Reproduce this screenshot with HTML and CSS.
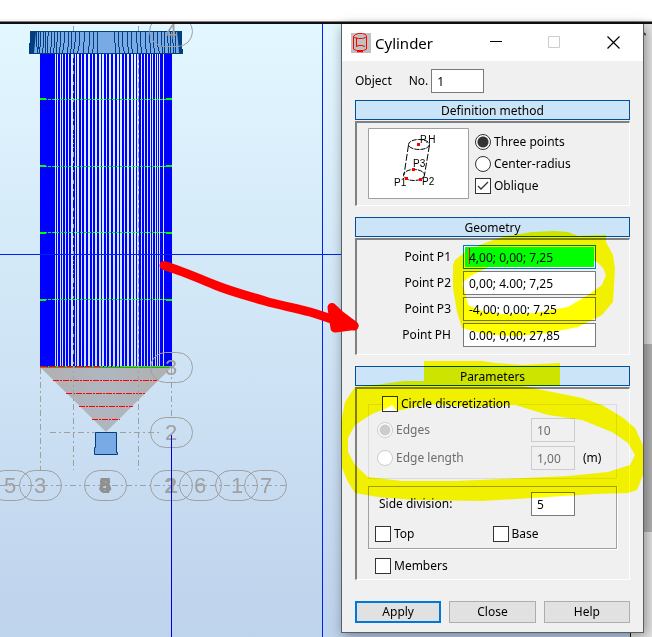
FILE: index.html
```
<!DOCTYPE html>
<html lang="en">
<head>
    <meta charset="UTF-8">
    <meta name="viewport" content="width=device-width, initial-scale=1.0">
    <title>Cylinder</title>
    <link rel="stylesheet" href="styles.css">
</head>
<body>
    <div class="toolbar"></div>
    <main class="workspace">
        <div class="view">
            <svg class="model" viewBox="0 24 652 613" width="652" height="613">
                <defs>
                    <linearGradient id="sky" gradientUnits="userSpaceOnUse" x1="0" y1="24" x2="0" y2="637">
                        <stop offset="0" stop-color="#e2f7ff"/>
                        <stop offset="1" stop-color="#bed3ec"/>
                    </linearGradient>
                    <linearGradient id="cone" x1="0" y1="0" x2="1" y2="0">
                        <stop offset="0" stop-color="#b0b0b0"/>
                        <stop offset=".5" stop-color="#b0b6c0"/>
                        <stop offset="1" stop-color="#b0b0b0"/>
                    </linearGradient>
                </defs>

                <!-- silo wall -->
                <rect x="40" y="54" width="132" height="313" fill="#0000ff"/>
                <g stroke="url(#sky)" fill="none">
                    <path d="M55.5 54v312M57.5 54v312M60.5 54v312M62.5 54v312M65.5 54v312M68.5 54v312M75.5 54v312M81.5 54v312M92.5 54v312M106.5 54v312M124.5 54v312M141.5 54v312M144.5 54v312M147.5 54v312M150.5 54v312M152.5 54v312M155.5 54v312M157.5 54v312M159.5 54v312M163.5 54v312"/>
                    <path stroke-width="2" d="M72 54v312M78 54v312M85 54v312M89 54v312M96 54v312M100 54v312M103 54v312M110 54v312M114 54v312M118 54v312M121 54v312M128 54v312M132 54v312M135 54v312M138 54v312"/>
                </g>
                <g stroke="#00ff00">
                    <path d="M40 99.5h132M40 166.5h132M40 232.5h132M40 299.5h132M40 366.5h132" stroke-dasharray="3 1"/>
                    <path stroke-width="2" d="M40 99h6M166 99h6M40 166h6M166 166h6M40 233h6M166 233h6M40 300h6M166 300h6M120 367h52"/>
                </g>

                <!-- hopper -->
                <path d="M40 367H172L106 432z" fill="url(#cone)"/>
                <g stroke="#ff0000">
                    <path d="M40 366.5h60" stroke-dasharray="7 2"/>
                    <path d="M53 380.5h104M66 393.5h80M79 406.5h54M92 419.5h28" stroke-dasharray="6 1 2 1"/>
                </g>
                <path d="M40 367.5h132" stroke="#7a7a3a"/>

                <!-- axes -->
                <g stroke="#a0a0a0" stroke-dasharray="6 3 2 3" fill="none">
                    <path d="M40.5 368V470M73.5 26V470M138.5 26V470M171.5 368V418M50 432.5H162M0 485.5H286"/>
                </g>
                <path d="M73.5 58V366" stroke="#0000c0" stroke-dasharray="4 5"/>
                <path d="M0 254.5H342M322.5 24V637" stroke="#0022f0"/>

                <!-- ring beam -->
                <path d="M30 31H182V49h1v5H29V43h1z" fill="#004080"/>
                <path d="M36 32H177l1 9 1 12H34l1-10z" fill="#7aaae6"/>
                <path class="crisp" d="M36.5 32v8l1 13M38.5 32v12l1 9M40.5 32v9l-1 12M43.5 32v12l-1 9M45.5 32v21M48.5 32l-1 9v12M51.5 32v10l-1 11M54.5 32v12l-1 9M57.5 32l-1 21M60.5 32v9l-1 12M64.5 32v8l-2 13M68.5 32v10l-1 11M71.5 32v14l-1 7M75.5 32v7l-2 14M79.5 32v12l-2 9M84.5 32l-1 21M89.5 32v8l-1 13M93.5 32v13l-1 8M97.5 32v21M114.5 32l1 21M118.5 32v9l1 12M122.5 32v13l2 8M127.5 32v8l1 13M131.5 32v12l1 9M136.5 32l1 21M140.5 32v8l1 13M145.5 32v12l1 9M149.5 32l1 21M153.5 32v10l1 11M157.5 32v13l2 8M161.5 32v9l1 12M164.5 32v21M167.5 32l1 21M170.5 32v21M172.5 32l1 21M175.5 32v21" stroke="#004080" fill="none"/>

                <!-- outlet -->
                <path d="M95.5 432.5h21v20h1v2h-23v-7h1z" fill="#7aaae6" stroke="#004080"/>

                <!-- axis bubbles -->
                <g fill="none" stroke="#a0a0a0">
                    <rect x="149.5" y="16.5" width="43" height="30" rx="15"/>
                    <rect x="150.5" y="352.5" width="42" height="30" rx="15"/>
                    <rect x="150.5" y="417.5" width="42" height="30" rx="15"/>
                    <rect x="-10.5" y="470.5" width="42" height="30" rx="15"/>
                    <rect x="19.5" y="470.5" width="42" height="30" rx="15"/>
                    <rect x="84.5" y="470.5" width="42" height="30" rx="15"/>
                    <rect x="150.5" y="470.5" width="42" height="30" rx="15"/>
                    <rect x="179.5" y="470.5" width="42" height="30" rx="15"/>
                    <rect x="215.5" y="470.5" width="42" height="30" rx="15"/>
                    <rect x="244.5" y="470.5" width="42" height="30" rx="15"/>
                </g>
                <g class="bubble-text">
                    <text x="171" y="39">4</text>
                    <text x="171" y="375">3</text>
                    <text x="171" y="440">2</text>
                    <text x="10" y="493">5</text>
                    <text x="40" y="493">3</text>
                    <g class="stacked">
                        <text x="105" y="493">4</text>
                        <text x="105" y="493">5</text>
                        <text x="105" y="493">8</text>
                    </g>
                    <text x="170" y="493">2</text>
                    <text x="171" y="493">2</text>
                    <text x="172" y="493">1</text>
                    <text x="200" y="493">6</text>
                    <text x="237" y="493">1</text>
                    <text x="266" y="493">7</text>
                </g>
                <path d="M171.5 435V637" stroke="#0000d8"/>
            </svg>
        </div>
        <div class="scroll-strip">
            <svg width="8" height="5" viewBox="0 0 8 5"><path d="M0 4l4-3 4 3" fill="none" stroke="#505050" stroke-width="2"/></svg>
            <div class="thumb"></div>
        </div>

        <form class="dialog" onsubmit="return false">
            <header class="titlebar">
                <svg width="20" height="20" viewBox="0 0 20 20">
                    <path d="M0 0h20v20H0z" fill="#c0c0c0"/>
                    <g fill="none" stroke="#ff0000">
                        <path d="M2.5 3.5l2-2 3-1h4l3 1 1 2-1 1-3 1h-4l-4-1z"/>
                        <path d="M2.500 3v13M15.500 3v13M5.500 5v8"/>
                        <path d="M5 13.500l3-1h3l3 1M2.500 16l3 1.500h7l3-1.500"/>
                        <path d="M6 18.500h6" stroke-width="1.500"/>
                    </g>
                </svg>
                <h1>Cylinder</h1>
                <button type="button" class="win-btn" aria-label="Minimize">
                    <svg width="13" height="13"><path d="M0 5.500h12" stroke="#000"/></svg>
                </button>
                <button type="button" class="win-btn" aria-label="Maximize" disabled>
                    <svg width="13" height="13"><path d="M.5.5h11v11H.5z" stroke="#ccc" fill="none"/></svg>
                </button>
                <button type="button" class="win-btn" aria-label="Close">
                    <svg width="13" height="13"><path d="M.5.5l12 12M12.500.5l-12 12" stroke="#000" stroke-width="1.200"/></svg>
                </button>
            </header>

            <div class="content">
                <div class="object-row">
                    <span>Object</span>
                    <label for="number">No.</label>
                    <input type="text" id="number" class="field number" value="1">
                </div>

                <h2>Definition method</h2>
                <section class="panel method">
                    <svg class="sketch" width="101" height="71" viewBox="0 0 101 71">
                        <path d="M.5.5h100v70H.5z" fill="#fff" stroke="#a0a0a0"/>
                        <g fill="none" stroke="#000">
                            <ellipse cx="51" cy="16.500" rx="10.500" ry="5" stroke-dasharray="5 1"/>
                            <ellipse cx="46" cy="47" rx="10.500" ry="5.500" stroke-dasharray="5 1"/>
                            <path d="M40.500 17l-4.500 30M61.500 17l-5 30" stroke-dasharray="7 2"/>
                        </g>
                        <path d="M49 15h3v3h-3zM44 40h3v3h-3zM37 49h3v3h-3zM51 50h3v3h-3z" fill="#ff0000"/>
                        <g class="sketch-text">
                            <text x="52" y="15">P.H</text>
                            <text x="45" y="39">P3</text>
                            <text x="26" y="58">P1</text>
                            <text x="54" y="57">P2</text>
                        </g>
                    </svg>
                    <div class="options">
                        <label><input type="radio" name="method" checked>Three points</label>
                        <label><input type="radio" name="method">Center-radius</label>
                        <label><input type="checkbox" checked>Oblique</label>
                    </div>
                </section>

                <h2>Geometry</h2>
                <section class="panel geometry">
                    <label for="p1">Point P1</label>
                    <input type="text" id="p1" class="field active" value="4,00; 0,00; 7,25">
                    <label for="p2">Point P2</label>
                    <input type="text" id="p2" class="field" value="0,00; 4.00; 7,25">
                    <label for="p3">Point P3</label>
                    <input type="text" id="p3" class="field" value="-4,00; 0,00; 7,25">
                    <label for="ph">Point PH</label>
                    <input type="text" id="ph" class="field" value="0.00; 0,00; 27,85">
                </section>

                <h2>Parameters</h2>
                <section class="panel parameters">
                    <fieldset class="circle">
                        <legend><label><input type="checkbox">Circle discretization</label></legend>
                        <div class="circle-grid">
                            <label class="off"><input type="radio" name="disc" checked disabled>Edges</label>
                            <input type="text" class="field" value="10" aria-label="Edges" disabled>
                            <span></span>
                            <label class="off"><input type="radio" name="disc" disabled>Edge length</label>
                            <input type="text" class="field" value="1,00" aria-label="Edge length" disabled>
                            <span>(m)</span>
                        </div>
                    </fieldset>
                    <div class="side">
                        <div class="side-row">
                            <label for="side">Side division:</label>
                            <input type="text" id="side" class="field" value="5">
                        </div>
                        <div class="checks">
                            <label><input type="checkbox">Top</label>
                            <label><input type="checkbox">Base</label>
                        </div>
                    </div>
                    <label class="members"><input type="checkbox">Members</label>
                </section>

                <div class="buttons">
                    <button type="submit" class="default">Apply</button>
                    <button type="button">Close</button>
                    <button type="button">Help</button>
                </div>
            </div>
        </form>

        <!-- marker strokes over the dialog -->
        <svg class="marks marker" viewBox="0 24 652 613" width="652" height="613">
            <path fill="#ffff00" fill-rule="evenodd" d="M453 265L455 260 468 250 485 243 502 237 532 232 555 231 568 232 578 236 606 235V242L613 255 615 268 613 302 602 315 578 327 548 333 515 336 485 334 462 328 457 312 453 288z
                M462 283L472 275 495 264 596 261 603 268 606 275 602 285 588 295 568 307 535 313 502 314 482 311 468 305 465 292z"/>
            <path fill="#ffff00" fill-rule="evenodd" d="M424 361H482L495 363 522 365 560 363V386H522L552 392 582 398 602 405 622 417 635 428 643 445V475L637 490 628 493 595 494 548 497 482 501 415 500 378 497 355 493 348 482 342 468 341 422 345 402 355 387 375 385 404 381H424z
                M348 438L355 425 372 414 385 409 392 405 397 411 428 404 470 407 515 405 548 415 582 420 612 432 628 443 635 455 630 465 608 472 568 476 502 479 455 481 402 481 368 477 355 465 348 452z"/>
        </svg>
        <svg class="marks" viewBox="0 24 652 613" width="652" height="613">
            <g fill="none" stroke="#ff0000" stroke-width="9" stroke-linecap="round" stroke-linejoin="round">
                <path d="M164 265.5C182 271 198 278 215 285S252 297 265 301 296 308 310 312 335 321 354 326"/>
                <path d="M332 307.5L340 315 354 325.5 335 328z" fill="#ff0000"/>
            </g>
        </svg>
    </main>
</body>
</html>
```
FILE: styles.css
```
* {
    box-sizing: border-box;
}
body {
    margin: 0;
    min-height: 100vh;
    display: flex;
    flex-direction: column;
    background: #fff;
    color: #000;
    font: 12px/16px "Noto Sans", Tahoma, sans-serif;
    overflow: hidden;
}
.toolbar {
    height: 24px;
    background: linear-gradient(#fff 80%, #f0f0f0);
    border-bottom: 2px solid #101010;
    box-shadow: inset 0 -1px #808080;
}
.workspace {
    position: relative;
    flex: 1;
    display: flex;
}
.view {
    flex: 1;
    overflow: hidden;
    position: relative;
    background: linear-gradient(#e2f7ff, #bed3ec);
    border-right: 1px solid #101010;
}
.model,
.marks {
    position: absolute;
    left: 0;
    top: 0;
}
.marks {
    pointer-events: none;
}
.marker {
    mix-blend-mode: multiply;
}
.crisp {
    shape-rendering: crispEdges;
}
.bubble-text {
    font: 22px "Liberation Sans", Arial, sans-serif;
    fill: #a0a0a0;
    text-anchor: middle;
}
.stacked {
    font-weight: bold;
    fill: #909090;
}
.scroll-strip {
    display: flex;
    flex-direction: column;
    align-items: center;
    gap: 308px;
    width: 21px;
    padding-top: 7px;
    background: #e6e6e6;
}
.thumb {
    width: 100%;
    height: 188px;
    background: #b4b4b4;
}

/* dialog window */
.dialog {
    position: absolute;
    left: 341px;
    right: 8px;
    top: 0;
    background: #f0f0f0;
    border: 1px solid #5a5f66;
    border-top: 0;
    box-shadow: 2px 3px 12px rgba(0, 0, 0, .4);
}
.titlebar {
    display: flex;
    align-items: center;
    height: 37px;
    padding: 0 16px 0 9px;
    background: #fff;
}
.titlebar h1 {
    flex: 1;
    margin: 0 0 0 4px;
    font-size: 15px;
    font-weight: normal;
}
.win-btn {
    display: flex;
    justify-content: center;
    width: 58px;
    padding: 0;
    border: 0;
    background: none;
}
.win-btn:last-child {
    width: 36px;
    margin-left: 12px;
    margin-right: -4px;
}
.content {
    padding: 8px 13px 9px;
}
.object-row {
    display: flex;
    align-items: center;
    margin-bottom: 7px;
}
.object-row label {
    margin-left: 17px;
    margin-right: 3px;
}
.field {
    width: 100%;
    height: 24px;
    padding: 0 5px;
    border: 1px solid #7a7a7a;
    border-radius: 0;
    background: #fff;
    color: #000;
    font: inherit;
}
.field:disabled {
    border-color: #ccc;
    background: #f0f0f0;
    color: #6d6d6d;
}
.number {
    width: 53px;
}
.active {
    border-color: #0078d7;
    background: linear-gradient(#ff0000, #ff0000) 5px 2px / 1px 16px no-repeat #00ff00;
    box-shadow: inset 0 0 0 1px #fff;
}
h2 {
    height: 20px;
    margin: 0 0 1px;
    border: 1px solid #00509b;
    background: #cce4f7;
    font-size: 12px;
    font-weight: normal;
    line-height: 19px;
    text-align: center;
}
.panel {
    margin-bottom: 11px;
    border: 2px solid #fff;
    border-top-color: #808080;
    border-left-color: #808080;
    border-right-width: 1px;
    border-bottom-width: 1px;
}
label {
    display: flex;
    align-items: center;
}
input[type="radio"],
input[type="checkbox"] {
    appearance: none;
    flex: none;
    width: 16px;
    height: 16px;
    margin: 0 3px 0 0;
    border: 1px solid #333;
    background: #fff;
}
input[type="radio"] {
    border-radius: 50%;
}
input[type="radio"]:checked {
    background: radial-gradient(circle, #333 5px, #fff 6px);
}
input[type="checkbox"]:checked {
    background: #fff url("data:image/svg+xml,%3Csvg xmlns='http://www.w3.org/2000/svg' viewBox='0 0 14 14'%3E%3Cpath d='M2 7l3 3 7-7' fill='none' stroke='%23333' stroke-width='1.300'/%3E%3C/svg%3E");
}
input[type="radio"]:disabled {
    border-color: #ccc;
}
input[type="radio"]:checked:disabled {
    background: radial-gradient(circle, #ccc 5px, #fff 6px);
}
.off {
    color: #6d6d6d;
}
.method {
    display: flex;
    gap: 6px;
    padding: 5px 11px 6px;
}
.sketch-text {
    font: 10px "Liberation Sans", Arial, sans-serif;
}
.options {
    display: grid;
    gap: 6px;
    align-content: start;
    padding-top: 6px;
}
.geometry {
    display: grid;
    grid-template-columns: 94px 1fr;
    gap: 2px 12px;
    padding: 5px 33px 7px 0;
}
.geometry label {
    justify-content: flex-end;
}
.parameters {
    padding: 7px 12px 5px 11px;
    margin-bottom: 21px;
}
.circle {
    margin: 0 0 7px;
    padding: 6px 8px 8px;
    border: 1px solid #dcdcdc;
}
.circle legend {
    margin-left: 5px;
    padding: 0 8px 0 0;
}
.circle-grid {
    display: grid;
    grid-template-columns: 1fr 44px 25px;
    gap: 4px 8px;
    align-items: center;
}
.side {
    padding: 5px 6px 6px;
    border: 1px solid #a0a0a0;
    box-shadow: 1px 1px #fff;
}
.side-row {
    display: flex;
    justify-content: space-between;
    margin-bottom: 10px;
    padding: 0 35px 0 4px;
}
.side-row .field {
    width: 44px;
}
.checks {
    display: grid;
    grid-template-columns: 1fr 1fr;
}
.members {
    margin: 9px 0 0 7px;
}
.buttons {
    display: grid;
    grid-template-columns: 1fr 1fr 1fr;
    gap: 8px;
}
.buttons button {
    height: 22px;
    padding: 0;
    border: 1px solid #adadad;
    background: #e1e1e1;
    color: #000;
    font: inherit;
}
.buttons .default {
    border: 2px solid #0078d7;
}
```
